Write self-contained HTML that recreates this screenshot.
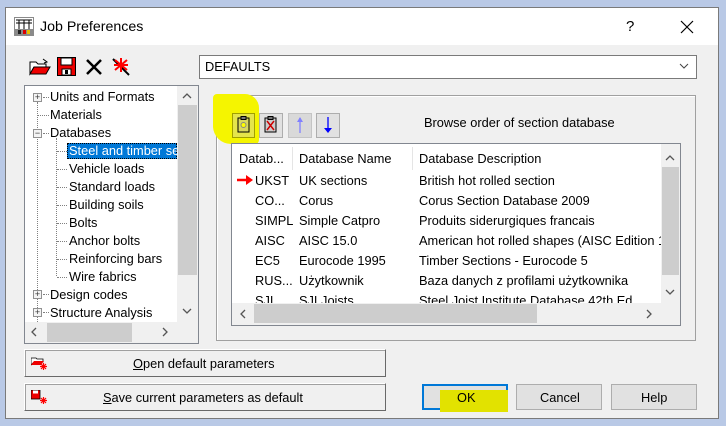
<!DOCTYPE html>
<html><head><meta charset="utf-8"><style>
*{margin:0;padding:0;box-sizing:border-box}
body{width:726px;height:426px;background:#b9c9e6;position:relative;overflow:hidden;font-family:"Liberation Sans",sans-serif;font-size:12.8px;color:#000}
.a{position:absolute}
.t{position:absolute;white-space:nowrap;font-size:12.8px;line-height:14px}
.btn{position:absolute;background:#e1e1e1;border:1px solid #adadad;text-align:center}
.b3{position:absolute;background:#f0f0f0;border-top:1px solid #fff;border-left:1px solid #fff;border-right:1px solid #696969;border-bottom:1px solid #696969;box-shadow:1px 1px 0 #a0a0a0 inset}
.dot{position:absolute;border-top:1px dotted #808080;width:10px}
.pm{position:absolute;width:9px;height:9px;border:1px solid #919191;background:#f4f4f4;font-size:9px;line-height:7px;text-align:center;color:#333}
</style></head><body>
<div class="a" style="left:5px;top:7px;width:714px;height:412px;background:#f0f0f0;border:1px solid #7a7a7a"></div>
<div class="a" style="left:6px;top:8px;width:712px;height:37px;background:#fff"></div>
<svg class="a" style="left:14px;top:17px" width="20" height="19"><rect x="0" y="0" width="20" height="19" fill="#8a8a8a"/><rect x="1" y="1" width="18" height="11" fill="#fff"/><path d="M2 3h16M2 6h16M5 3v9M10 3v9M15 3v9" stroke="#000"/><rect x="4" y="13" width="3" height="4" fill="#222"/><rect x="9" y="13" width="3" height="4" fill="#d00"/><rect x="13" y="13" width="3" height="4" fill="#e8c000"/></svg>
<div class="t" style="left:40px;top:18px;font-size:14.2px;line-height:18px">Job Preferences</div>
<div class="t" style="left:626px;top:18px;font-size:15px;line-height:18px">?</div>
<svg class="a" style="left:680px;top:20px" width="14" height="14"><path d="M1 1L13 13M13 1L1 13" stroke="#000" stroke-width="1.2"/></svg>
<svg class="a" style="left:29px;top:58px" width="22" height="18"><path d="M1 4h6l2 2h8v3H5L1 16z" fill="#fff" stroke="#000"/><path d="M1 16L5 9h16l-4 7z" fill="#e00" stroke="#000"/><path d="M14 1l4 3-3 1" fill="none" stroke="#000"/></svg>
<svg class="a" style="left:57px;top:57px" width="19" height="19"><rect x="0.5" y="0.5" width="18" height="18" fill="#e00" stroke="#000"/><rect x="4" y="1" width="11" height="7" fill="#fff" stroke="#000"/><rect x="5" y="12" width="9" height="6" fill="#fff" stroke="#000"/><rect x="8" y="13" width="3" height="4" fill="#000"/></svg>
<svg class="a" style="left:85px;top:58px" width="18" height="18"><path d="M2 2L16 16M16 2L2 16" stroke="#000" stroke-width="2.5"/></svg>
<svg class="a" style="left:111px;top:57px" width="20" height="20"><path d="M2 2L18 18" stroke="#000" stroke-width="2"/><path d="M10 1v14M3 8h14M4 3l12 10M16 3L4 13" stroke="#f00" stroke-width="2"/></svg>
<div class="a" style="left:199px;top:55px;width:498px;height:24px;background:#fff;border:1px solid #7a7a7a"></div>
<div class="t" style="left:205px;top:60px">DEFAULTS</div>
<svg class="a" style="left:679px;top:63px" width="10" height="7"><path d="M1 1l4 4 4-4" fill="none" stroke="#444"/></svg>
<div class="a" style="left:24px;top:85px;width:175px;height:259px;background:#fff;border:1px solid #828790"></div>
<div class="a" style="left:37px;top:102px;height:220px;border-left:1px dotted #808080"></div>
<div class="a" style="left:56px;top:138px;height:138px;border-left:1px dotted #808080"></div>
<div class="pm" style="left:33px;top:93px">+</div><div class="dot" style="left:43px;top:97px;width:6px"></div>
<div class="t" style="left:50px;top:90px">Units and Formats</div>
<div class="dot" style="left:38px;top:115px;width:11px"></div>
<div class="t" style="left:50px;top:108px">Materials</div>
<div class="pm" style="left:33px;top:129px">−</div><div class="dot" style="left:43px;top:133px;width:6px"></div>
<div class="t" style="left:50px;top:126px">Databases</div>
<div class="dot" style="left:57px;top:151px"></div>
<div class="a" style="left:67px;top:143px;width:110px;height:16px;background:#0078d7;border:1px dotted #000"></div>
<div class="t" style="left:69px;top:144px;color:#fff;width:108px;overflow:hidden">Steel and timber se</div>
<div class="dot" style="left:57px;top:169px"></div><div class="t" style="left:69px;top:162px">Vehicle loads</div>
<div class="dot" style="left:57px;top:187px"></div><div class="t" style="left:69px;top:180px">Standard loads</div>
<div class="dot" style="left:57px;top:205px"></div><div class="t" style="left:69px;top:198px">Building soils</div>
<div class="dot" style="left:57px;top:223px"></div><div class="t" style="left:69px;top:216px">Bolts</div>
<div class="dot" style="left:57px;top:241px"></div><div class="t" style="left:69px;top:234px">Anchor bolts</div>
<div class="dot" style="left:57px;top:259px"></div><div class="t" style="left:69px;top:252px">Reinforcing bars</div>
<div class="dot" style="left:57px;top:277px"></div><div class="t" style="left:69px;top:270px">Wire fabrics</div>
<div class="pm" style="left:33px;top:290px">+</div><div class="dot" style="left:43px;top:294px;width:6px"></div>
<div class="t" style="left:50px;top:288px">Design codes</div>
<div class="pm" style="left:33px;top:308px">+</div><div class="dot" style="left:43px;top:312px;width:6px"></div>
<div class="t" style="left:50px;top:306px">Structure Analysis</div>
<div class="a" style="left:177px;top:86px;width:21px;height:238px;background:#f0f0f0"></div>
<div class="a" style="left:178px;top:105px;width:19px;height:170px;background:#cdcdcd"></div>
<svg class="a" style="left:182px;top:93px" width="10" height="6"><path d="M1 5l4-4 4 4" fill="none" stroke="#555" stroke-width="1.3"/></svg>
<svg class="a" style="left:182px;top:308px" width="10" height="6"><path d="M1 1l4 4 4-4" fill="none" stroke="#555" stroke-width="1.3"/></svg>
<div class="a" style="left:25px;top:322px;width:173px;height:21px;background:#f0f0f0"></div>
<div class="a" style="left:47px;top:323px;width:85px;height:19px;background:#cdcdcd"></div>
<svg class="a" style="left:31px;top:327px" width="6" height="10"><path d="M5 1L1 5l4 4" fill="none" stroke="#555" stroke-width="1.3"/></svg>
<svg class="a" style="left:162px;top:327px" width="6" height="10"><path d="M1 1l4 4-4 4" fill="none" stroke="#555" stroke-width="1.3"/></svg>
<div class="a" style="left:216px;top:95px;width:480px;height:246px;border:1px solid #a0a0a0;box-shadow:1px 1px 0 #fff inset"></div>
<div class="a" style="left:213px;top:94px;width:46px;height:50px;background:#f5f500;border-radius:4px 14px 4px 18px"></div>
<div class="a" style="left:232px;top:113px;width:23px;height:25px;background:#e5e54a;border:1px solid #a0a000"></div>
<svg class="a" style="left:236px;top:116px" width="16" height="18"><rect x="2" y="2" width="11" height="14" fill="#d8d860" stroke="#000"/><rect x="5" y="0.5" width="5" height="3" fill="#777" stroke="#000"/><circle cx="7.5" cy="9" r="2.5" fill="#ff0" stroke="#888"/></svg>
<div class="a" style="left:259px;top:113px;width:24px;height:25px;background:#e1e1e1;border:1px solid #adadad"></div>
<svg class="a" style="left:263px;top:116px" width="16" height="18"><rect x="2" y="2" width="11" height="14" fill="#ccc" stroke="#000"/><rect x="5" y="0.5" width="5" height="3" fill="#777" stroke="#000"/><path d="M4 5l7 9M11 5l-7 9" stroke="#c00" stroke-width="1.5"/></svg>
<div class="a" style="left:288px;top:113px;width:24px;height:25px;background:#d9d9d9;border:1px solid #c4c4c4"></div>
<svg class="a" style="left:295px;top:116px" width="10" height="18"><path d="M5 2v15" stroke="#8080ff" stroke-width="1.3"/><path d="M2 6l3-5 3 5z" fill="#8080ff"/></svg>
<div class="a" style="left:316px;top:113px;width:24px;height:25px;background:#e1e1e1;border:1px solid #adadad"></div>
<svg class="a" style="left:323px;top:116px" width="10" height="18"><path d="M5 1v14" stroke="#0000ff" stroke-width="1.3"/><path d="M1 12l4 5 4-5z" fill="#0000ff"/></svg>
<div class="t" style="left:424px;top:116px">Browse order of section database</div>
<div class="a" style="left:231px;top:143px;width:450px;height:183px;background:#fff;border:1px solid #828790"></div>
<div class="a" style="left:292px;top:147px;height:23px;border-left:1px solid #e5e5e5"></div>
<div class="a" style="left:412px;top:147px;height:23px;border-left:1px solid #e5e5e5"></div>
<div class="t" style="left:239px;top:152px">Datab...</div>
<div class="t" style="left:299px;top:152px">Database Name</div>
<div class="t" style="left:419px;top:152px">Database Description</div>
<svg class="a" style="left:237px;top:175px" width="17" height="10"><path d="M0 5h10" stroke="#f00" stroke-width="2.5"/><path d="M9 0l7 5-7 5z" fill="#f00"/></svg>
<div class="t" style="left:255px;top:174px">UKST</div><div class="t" style="left:299px;top:174px">UK sections</div><div class="t" style="left:419px;top:174px">British hot rolled section</div>
<div class="t" style="left:255px;top:194px">CO...</div><div class="t" style="left:299px;top:194px">Corus</div><div class="t" style="left:419px;top:194px">Corus Section Database 2009</div>
<div class="t" style="left:255px;top:214px">SIMPL</div><div class="t" style="left:299px;top:214px">Simple Catpro</div><div class="t" style="left:419px;top:214px">Produits siderurgiques francais</div>
<div class="t" style="left:255px;top:234px">AISC</div><div class="t" style="left:299px;top:234px">AISC 15.0</div><div class="t" style="left:419px;top:234px;width:242px;overflow:hidden">American hot rolled shapes (AISC Edition 15)</div>
<div class="t" style="left:255px;top:254px">EC5</div><div class="t" style="left:299px;top:254px">Eurocode 1995</div><div class="t" style="left:419px;top:254px">Timber Sections - Eurocode 5</div>
<div class="t" style="left:255px;top:274px">RUS...</div><div class="t" style="left:299px;top:274px">Użytkownik</div><div class="t" style="left:419px;top:274px">Baza danych z profilami użytkownika</div>
<div class="a" style="left:232px;top:293px;width:430px;height:10px;overflow:hidden"><div class="t" style="left:23px;top:1px">SJI</div><div class="t" style="left:67px;top:1px">SJI Joists</div><div class="t" style="left:187px;top:1px">Steel Joist Institute Database 42th Ed</div></div>
<div class="a" style="left:661px;top:144px;width:19px;height:181px;background:#f0f0f0"></div>
<div class="a" style="left:662px;top:167px;width:17px;height:108px;background:#cdcdcd"></div>
<svg class="a" style="left:665px;top:155px" width="10" height="6"><path d="M1 5l4-4 4 4" fill="none" stroke="#555" stroke-width="1.3"/></svg>
<svg class="a" style="left:665px;top:289px" width="10" height="6"><path d="M1 1l4 4 4-4" fill="none" stroke="#555" stroke-width="1.3"/></svg>
<div class="a" style="left:232px;top:303px;width:429px;height:22px;background:#f0f0f0"></div>
<div class="a" style="left:254px;top:304px;width:283px;height:19px;background:#cdcdcd"></div>
<svg class="a" style="left:240px;top:309px" width="6" height="10"><path d="M5 1L1 5l4 4" fill="none" stroke="#555" stroke-width="1.3"/></svg>
<svg class="a" style="left:646px;top:309px" width="6" height="10"><path d="M1 1l4 4-4 4" fill="none" stroke="#555" stroke-width="1.3"/></svg>
<div class="b3" style="left:24px;top:349px;width:362px;height:28px"></div>
<svg class="a" style="left:31px;top:356px" width="16" height="14"><path d="M0 2h5l1 1h6v3H3L0 9z" fill="#fff" stroke="#000" stroke-width=".8"/><path d="M0 9l3-4h10l-3 4z" fill="#e00"/><path d="M10 8l5 5M15 8l-5 5M12.5 7v7M9 10.5h7" stroke="#f00" stroke-width="1.2"/></svg>
<div class="t" style="left:133px;top:357px"><u>O</u>pen default parameters</div>
<div class="b3" style="left:24px;top:383px;width:362px;height:28px"></div>
<svg class="a" style="left:31px;top:390px" width="16" height="14"><rect x="0" y="0" width="9" height="9" fill="#e00" stroke="#000" stroke-width=".8"/><rect x="2" y="0.5" width="5" height="3" fill="#fff"/><path d="M10 8l5 5M15 8l-5 5M12.5 7v7M9 10.5h7" stroke="#f00" stroke-width="1.2"/></svg>
<div class="t" style="left:103px;top:391px"><u>S</u>ave current parameters as default</div>
<div class="btn" style="left:422px;top:384px;width:86px;height:26px;border:2px solid #0078d7;background:#e1e1e1"></div>
<div class="a" style="left:440px;top:390px;width:68px;height:22px;background:#e2e200"></div>
<div class="t" style="left:457px;top:391px">OK</div>
<div class="btn" style="left:516px;top:384px;width:86px;height:26px"></div>
<div class="t" style="left:540px;top:391px">Cancel</div>
<div class="btn" style="left:611px;top:384px;width:86px;height:26px"></div>
<div class="t" style="left:641px;top:391px">Help</div>
</body></html>
